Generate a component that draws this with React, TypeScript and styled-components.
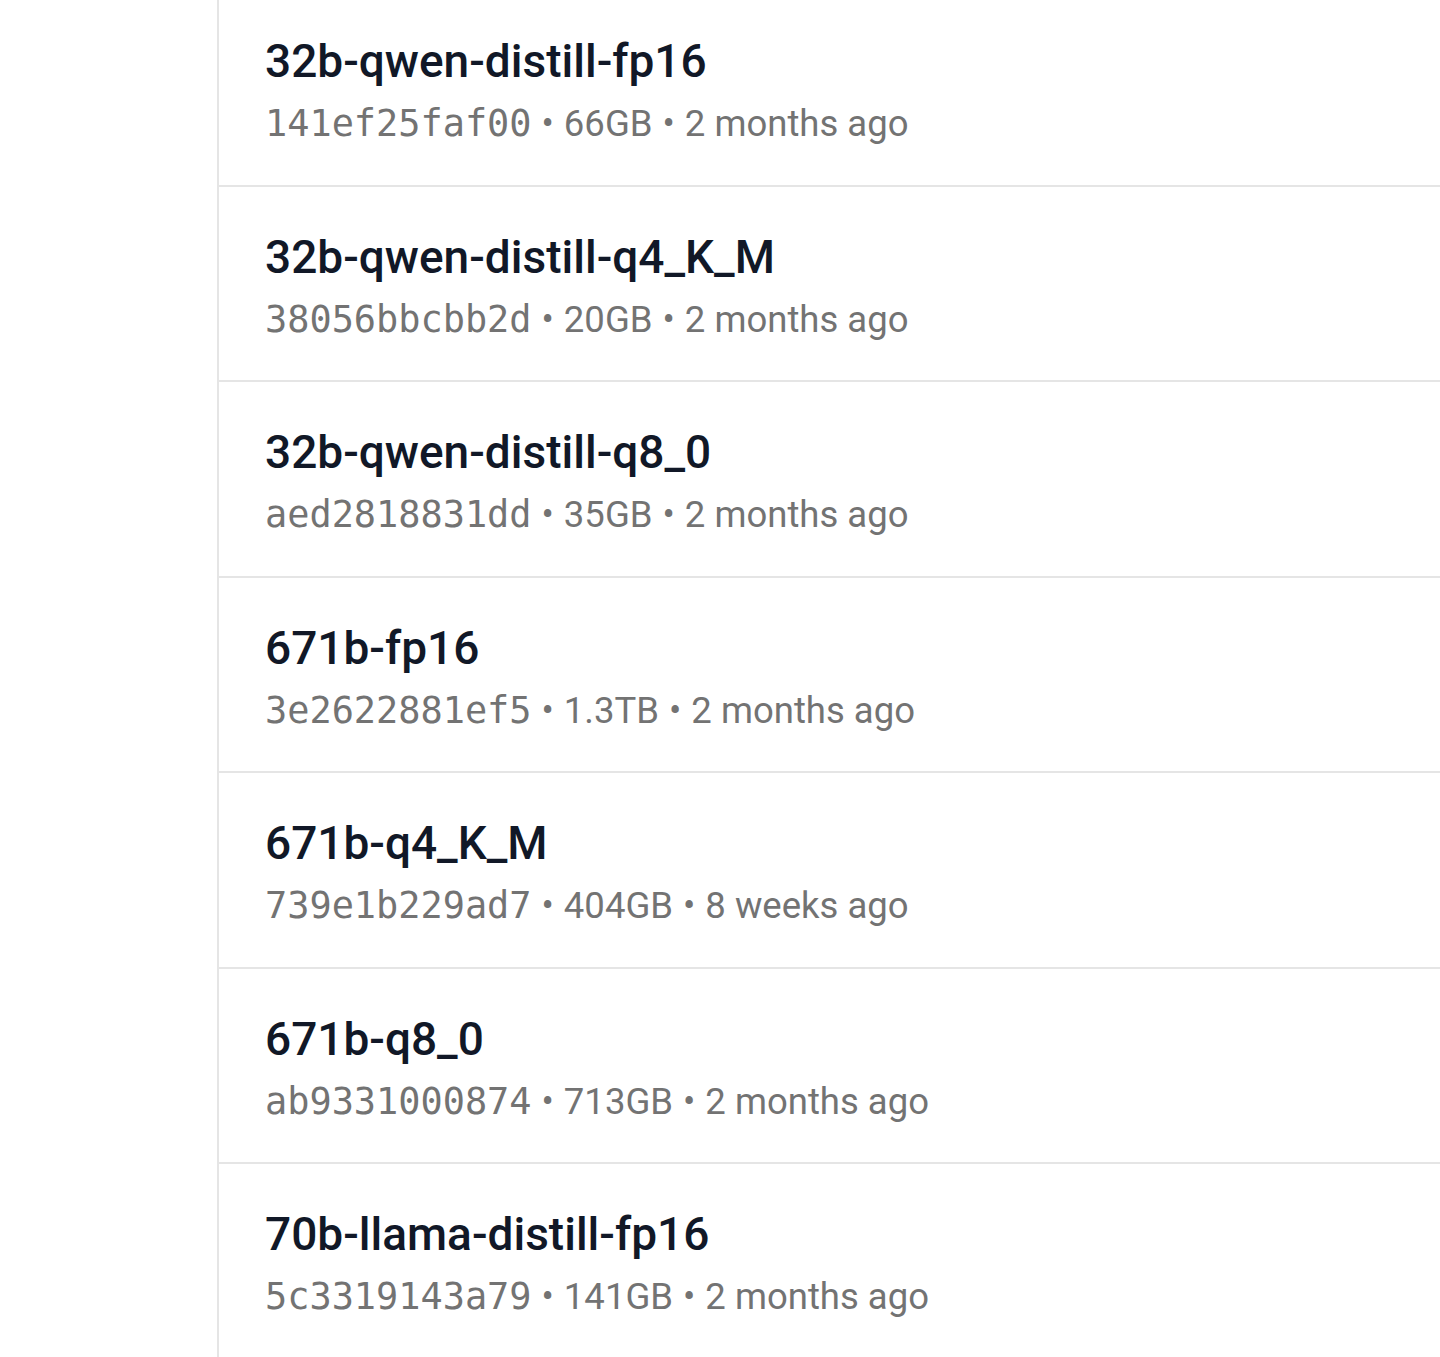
import React from "react";
import styled, { createGlobalStyle } from "styled-components";

const GlobalStyle = createGlobalStyle`
  html, body {
    margin: 0;
    padding: 0;
    background: #ffffff;
    overflow: hidden;
  }
`;

const Page = styled.div`
  display: flex;
  height: 1357px;
  overflow: hidden;
  font-family: Roboto, "Noto Sans", sans-serif;
`;

const Gutter = styled.div`
  width: 217px;
  flex-shrink: 0;
`;

const List = styled.ul`
  flex: 1;
  margin: -9px 0 0;
  padding: 0;
  list-style: none;
  border-left: 2px solid #e5e5e5;
`;

const Row = styled.li`
  box-sizing: border-box;
  height: 195.5px;
  padding: 41px 0 0 46px;
  display: flex;
  flex-direction: column;
  border-bottom: 2px solid #e5e5e5;
`;

const Title = styled.div`
  font-size: 46px;
  font-weight: 500;
  color: #111827;
  line-height: 58px;
`;

const Meta = styled.div`
  margin-top: 9px;
  font-size: 36.5px;
  color: #737373;
  line-height: 50px;
  white-space: nowrap;
`;

const Hash = styled.span`
  font-family: "DejaVu Sans Mono", "Liberation Mono", monospace;
  font-size: 36.9px;
`;

const Dot = styled.span`
  margin: 0 10px;
`;

const tags = [
  { name: "32b-qwen-distill-fp16", hash: "141ef25faf00", size: "66GB", age: "2 months ago" },
  { name: "32b-qwen-distill-q4_K_M", hash: "38056bbcbb2d", size: "20GB", age: "2 months ago" },
  { name: "32b-qwen-distill-q8_0", hash: "aed2818831dd", size: "35GB", age: "2 months ago" },
  { name: "671b-fp16", hash: "3e2622881ef5", size: "1.3TB", age: "2 months ago" },
  { name: "671b-q4_K_M", hash: "739e1b229ad7", size: "404GB", age: "8 weeks ago" },
  { name: "671b-q8_0", hash: "ab9331000874", size: "713GB", age: "2 months ago" },
  { name: "70b-llama-distill-fp16", hash: "5c3319143a79", size: "141GB", age: "2 months ago" },
];

export default function App() {
  return (
    <>
      <GlobalStyle />
      <Page>
        <Gutter />
        <List>
          {tags.map((t) => (
            <Row key={t.name}>
              <Title>{t.name}</Title>
              <Meta>
                <Hash>{t.hash}</Hash>
                <Dot>•</Dot>
                {t.size}
                <Dot>•</Dot>
                {t.age}
              </Meta>
            </Row>
          ))}
        </List>
      </Page>
    </>
  );
}
